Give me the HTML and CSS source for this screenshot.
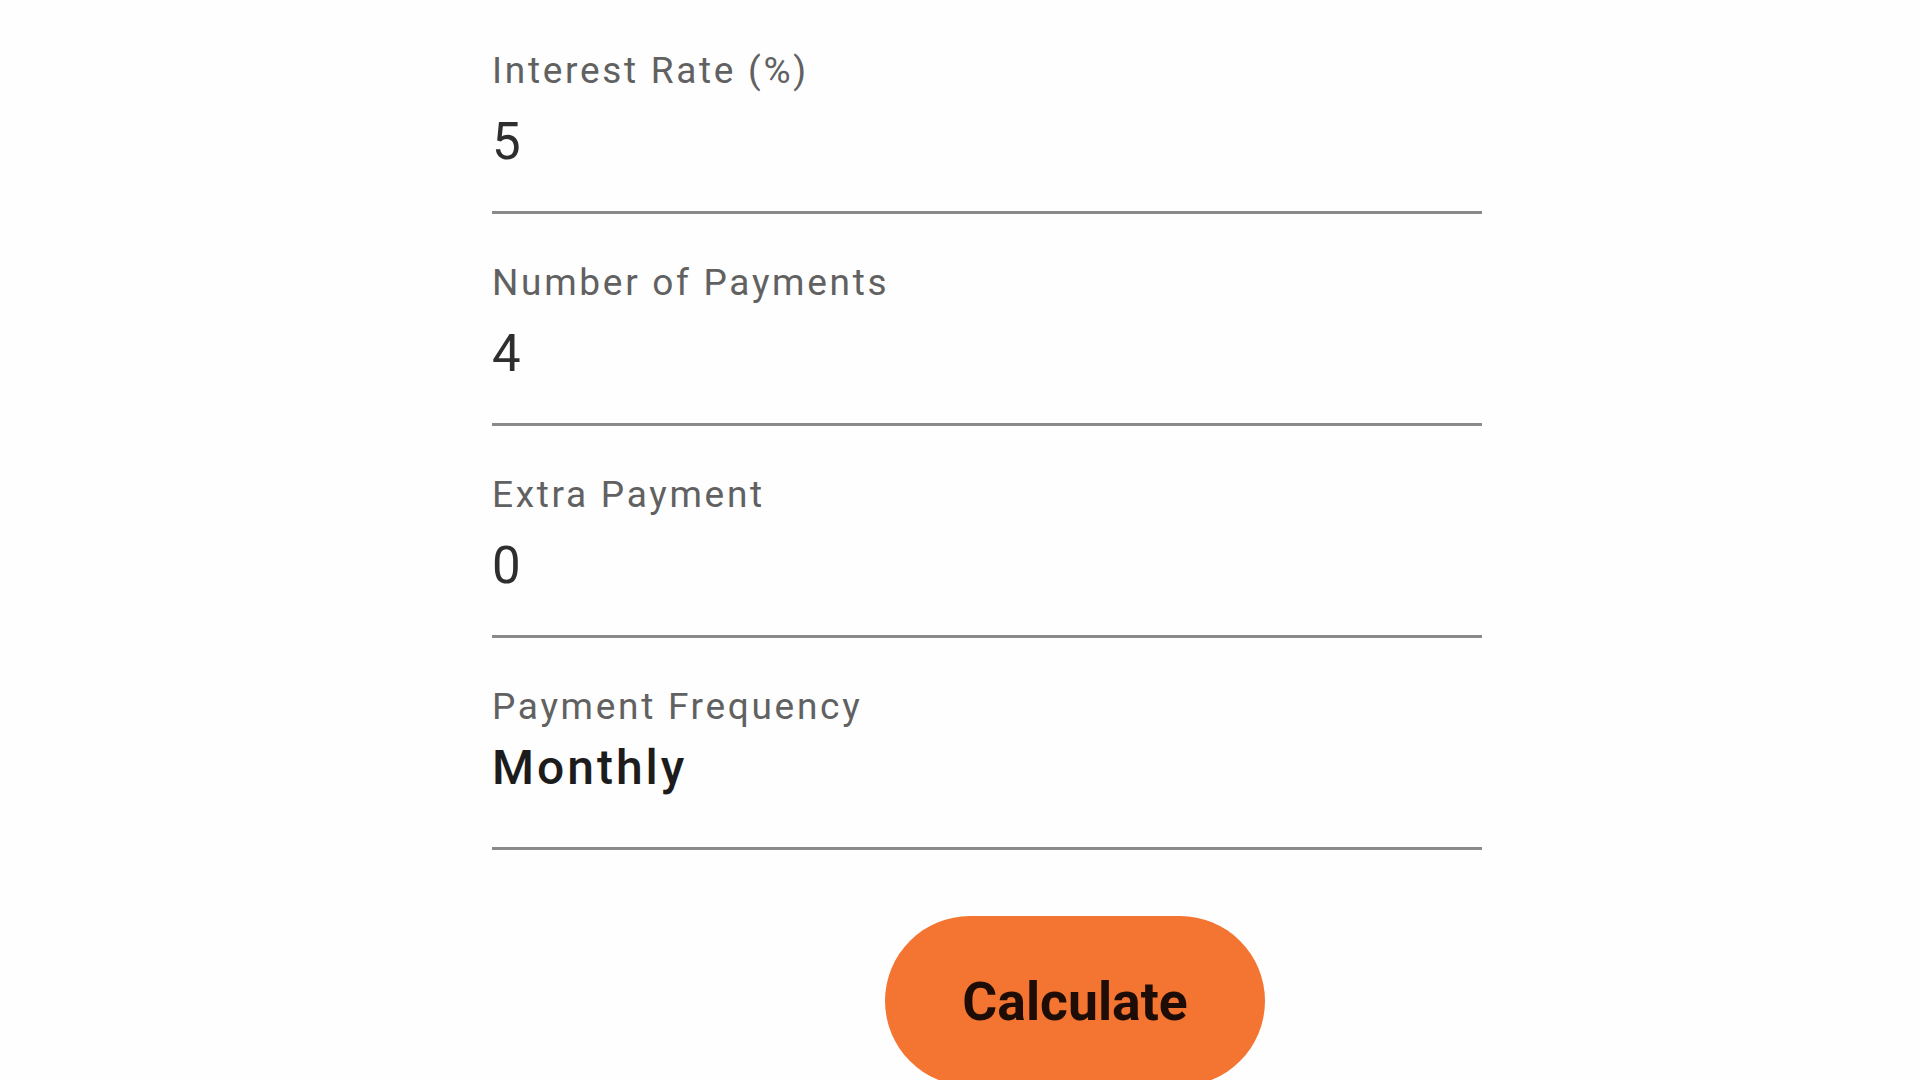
FILE: index.html
```html
<!DOCTYPE html>
<html lang="en">
<head>
<meta charset="utf-8">
<title>Loan Calculator</title>
<link rel="stylesheet" href="styles.css">
</head>
<body>
<main class="form">
  <div class="field">
    <div class="label">Interest Rate (%)</div>
    <div class="value">5</div>
  </div>
  <div class="field">
    <div class="label">Number of Payments</div>
    <div class="value">4</div>
  </div>
  <div class="field">
    <div class="label">Extra Payment</div>
    <div class="value">0</div>
  </div>
  <div class="field field-select">
    <div class="label">Payment Frequency</div>
    <div class="value value-select">Monthly</div>
  </div>
  <div class="actions">
    <button class="btn">Calculate</button>
  </div>
</main>
</body>
</html>
```
FILE: styles.css
```css
html, body {
  margin: 0;
  padding: 0;
  background: #fefefe;
  height: 1080px;
  overflow: hidden;
}
body {
  font-family: Roboto, "Liberation Sans", sans-serif;
  padding-top: 2px;
  box-sizing: border-box;
}
.form {
  width: 990px;
  margin-left: 492px;
  display: flex;
  flex-direction: column;
}
.field {
  padding-top: 51px;
  padding-bottom: 44px;
  border-bottom: 3px solid #8a8a8a;
  display: flex;
  flex-direction: column;
}
.label {
  font-size: 37px;
  line-height: 36px;
  height: 36px;
  color: #616161;
  letter-spacing: 2.7px;
  white-space: nowrap;
}
.value {
  margin-top: 28px;
  font-size: 51px;
  line-height: 50px;
  height: 50px;
  color: #2e2e2e;
  letter-spacing: 2px;
}
.field-select {
  padding-bottom: 54px;
}
.value-select {
  margin-top: 18px;
  font-size: 48px;
  font-weight: 500;
  color: #1c1c1c;
  letter-spacing: 3px;
}
.actions {
  display: flex;
  padding-top: 66px;
  padding-left: 393px;
}
.btn {
  width: 380px;
  height: 170px;
  border: none;
  border-radius: 85px;
  background: #f47432;
  color: #1e0d06;
  font-family: Roboto, "Liberation Sans", sans-serif;
  font-weight: 700;
  font-size: 53.5px;
  padding: 0;
  display: flex;
  align-items: center;
  justify-content: center;
}
```
